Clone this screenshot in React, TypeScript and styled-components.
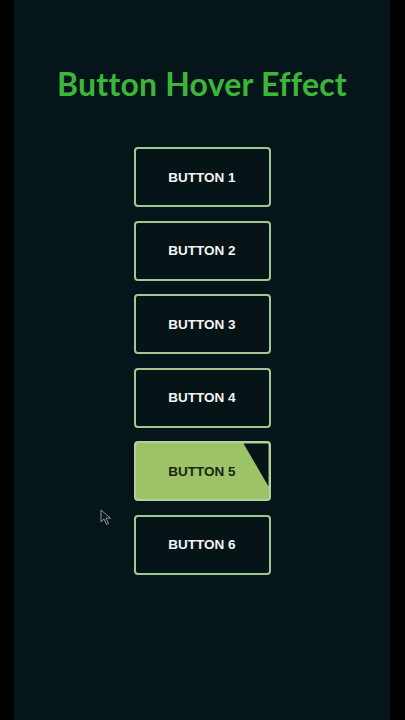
import styled, { createGlobalStyle } from "styled-components";

const GlobalStyle = createGlobalStyle`
    html, body {
        margin: 0;
        padding: 0;
        background: #000;
    }
`

const Page = styled.div`
    display: flex;
    justify-content: center;
    padding: 0 15px 0 14px;
    height: 720px;
    box-sizing: border-box;
    background: #000;
`

const Panel = styled.main`
    position: relative;
    flex: 1;
    background: #061519;
    display: flex;
    flex-direction: column;
    align-items: center;
    padding-top: 64px;
`

const Title = styled.h1`
    margin: 0 0 43px 0;
    font-family: "Lato", "Open Sans", sans-serif;
    font-weight: 700;
    font-size: 32px;
    line-height: 40px;
    color: #3cb53b;
    letter-spacing: 0.2px;
`

const List = styled.div`
    display: flex;
    flex-direction: column;
    gap: 13.6px;
`

const Button = styled.button<{ $active?: boolean }>`
    position: relative;
    width: 137px;
    height: 60px;
    box-sizing: border-box;
    border: 2px solid ${p => p.$active ? "#b4cfa0" : "#a3c792"};
    border-radius: 4px;
    background: ${p => p.$active ? "#9cc466" : "#061417"};
    color: ${p => p.$active ? "#1b2616" : "#f4f4f4"};
    font-family: "Liberation Sans", Arial, sans-serif;
    font-weight: 700;
    font-size: 13.5px;
    overflow: hidden;
    cursor: pointer;

    &::after {
        content: "";
        display: ${p => p.$active ? "block" : "none"};
        position: absolute;
        top: 0;
        right: 0;
        width: 25px;
        height: 43px;
        background: #061417;
        clip-path: polygon(0 0, 100% 0, 100% 100%);
    }
`

const Cursor = styled.svg`
    position: absolute;
    left: 86px;
    top: 509px;
`

const labels = ["BUTTON 1", "BUTTON 2", "BUTTON 3", "BUTTON 4", "BUTTON 5", "BUTTON 6"]

export default function App() {
    return (
        <>
            <GlobalStyle />
            <Page>
                <Panel>
                    <Title>Button Hover Effect</Title>
                    <List>
                        {labels.map((label, i) => (
                            <Button key={label} $active={i === 4}>{label}</Button>
                        ))}
                    </List>
                    <Cursor width="12" height="17" viewBox="0 0 12 17">
                        <path d="M1 1 L1 13 L4 10 L6.5 15.5 L8.5 14.6 L6 9.2 L10.5 9.2 Z" fill="#0b1a1d" stroke="#8a9699" strokeWidth="1" strokeLinejoin="round" />
                    </Cursor>
                </Panel>
            </Page>
        </>
    )
}
